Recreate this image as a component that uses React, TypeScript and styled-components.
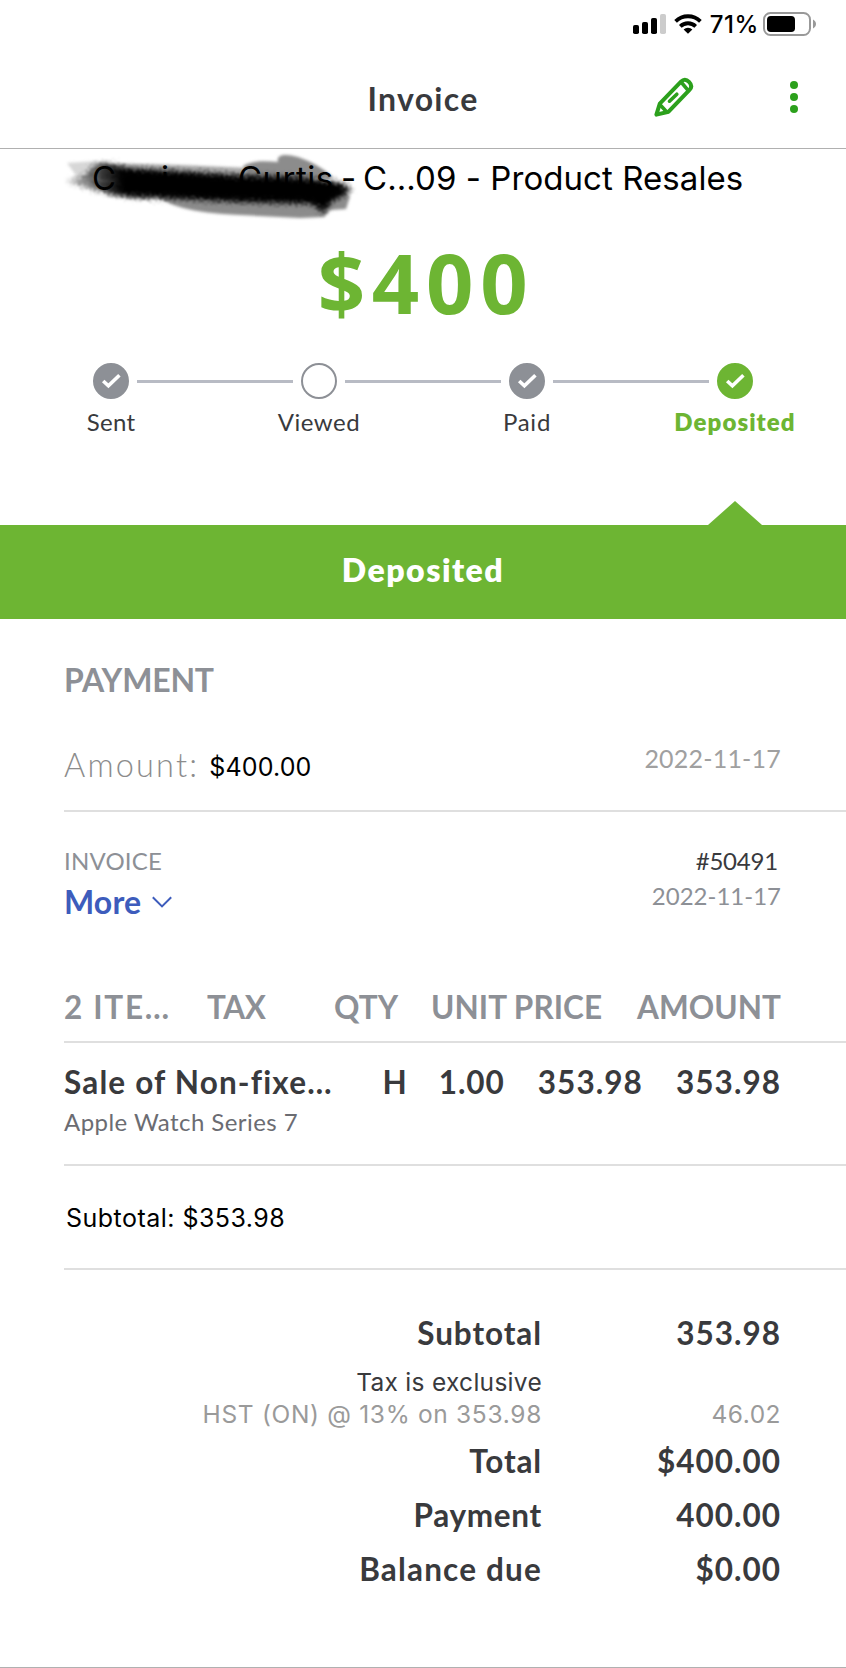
import React from "react";
import styled, { createGlobalStyle } from "styled-components";

const ink = "#393a3d";
const muted = "#8d9096";
const soft = "#a0a0a0";
const green = "#6db533";
const actionGreen = "#2ca01c";
const rule = "#dfdfdf";

const GlobalStyle = createGlobalStyle`
  * { box-sizing: border-box; }
  body { margin: 0; background: #fff; }
`;

type TextProps = {
  $size?: number;
  $weight?: number;
  $color?: string;
  $track?: number;
  $line?: number;
  $system?: boolean;
};

const Text = styled.span<TextProps>`
  display: block;
  white-space: pre;
  font-family: ${(p) => (p.$system ? '"Inter"' : '"Lato"')}, sans-serif;
  font-size: ${(p) => p.$size ?? 31.5}px;
  font-weight: ${(p) => p.$weight ?? 700};
  color: ${(p) => p.$color ?? ink};
  letter-spacing: ${(p) => p.$track ?? 0}px;
  line-height: ${(p) => (p.$line ? `${p.$line}px` : "normal")};
`;

const Screen = styled.main`
  width: 846px;
  height: 1668px;
  display: flex;
  flex-direction: column;
  overflow: hidden;
  background: #fff;
  border-bottom: 1px solid #b0b0b0;
`;

const StatusBar = styled.header`
  height: 48px;
  display: flex;
  align-items: center;
  justify-content: flex-end;
  padding-right: 30px;
`;

const StatusText = styled(Text)`
  margin: 0 4px 0 8px;
`;

const WifiIcon = styled.svg`
  margin-left: 8px;
`;

const NavBar = styled.nav`
  height: 101px;
  display: grid;
  grid-template-columns: 1fr auto 1fr;
  align-items: center;
  border-bottom: 1px solid #b0b0b0;
`;

const NavActions = styled.div`
  grid-column: 3;
  display: flex;
  align-items: center;
  justify-content: flex-end;
  gap: 96px;
  padding: 0 48px 2px 0;
`;

const NavTitle = styled(Text)`
  grid-column: 2;
`;

const Customer = styled.div`
  position: relative;
  height: 57px;
  display: flex;
  align-items: center;
  padding-left: 92px;
`;

const NamePart = styled(Text)<{ $width: number }>`
  position: relative;
  width: ${(p) => p.$width}px;
`;

const Scribble = styled.svg`
  position: absolute;
  left: 50px;
  top: 1px;
`;

const Total = styled.div`
  height: 151px;
  display: flex;
  align-items: center;
  justify-content: center;
  padding-left: 6px;
`;

const TotalText = styled(Text)`
  font-family: "Open Sans", sans-serif;
`;

const Stepper = styled.section`
  height: 168px;
  padding-top: 6px;
`;

const Track = styled.div`
  height: 36px;
  display: flex;
  align-items: center;
  gap: 8px;
  padding-left: 93px;
`;

const Dot = styled.div<{ $fill: string }>`
  width: 36px;
  height: 36px;
  flex: none;
  border-radius: 50%;
  background: ${(p) => p.$fill};
  border: 2px solid ${(p) => (p.$fill === "#fff" ? muted : p.$fill)};
  display: flex;
  align-items: center;
  justify-content: center;
`;

const Connector = styled.div`
  width: 156px;
  height: 3px;
  margin-top: 1px;
  flex: none;
  background: #b8bbc4;
`;

const StepLabels = styled.div`
  display: grid;
  grid-template-columns: repeat(4, 208px);
  justify-items: center;
  padding-left: 7px;
`;

const Banner = styled.section`
  position: relative;
  height: 94px;
  display: flex;
  align-items: center;
  justify-content: center;
  padding-bottom: 5px;
  background: ${green};
`;

const BannerArrow = styled.i`
  position: absolute;
  left: 708px;
  top: -24px;
  border: 27px solid transparent;
  border-top: 0;
  border-bottom: 24px solid ${green};
`;

const Content = styled.div`
  padding-left: 64px;
`;

const Section = styled.section<{ $height: number; $top?: number; $ruled?: boolean }>`
  height: ${(p) => p.$height}px;
  padding: ${(p) => p.$top ?? 0}px 65px 0 0;
  border-bottom: ${(p) => (p.$ruled ? `2px solid ${rule}` : "0")};
`;

const Between = styled.div`
  display: flex;
  justify-content: space-between;
  align-items: flex-start;
`;

const AmountLine = styled.div`
  display: flex;
  gap: 10px;
`;

const InvoiceNumber = styled(Text)`
  margin-right: 3px;
`;

const SubtotalNote = styled(Text)`
  padding-left: 2px;
`;

const MoreLink = styled.div`
  display: flex;
  align-items: center;
  gap: 11px;
`;

const TableRow = styled.div<{ $columns: string }>`
  display: grid;
  grid-template-columns: ${(p) => p.$columns};
`;

const RightText = styled(Text)`
  text-align: right;
`;

const Totals = styled.section`
  padding-top: 36px;
`;

const TotalRow = styled.div<{ $gapBelow?: number }>`
  display: grid;
  grid-template-columns: 478px 239px;
  margin-bottom: ${(p) => p.$gapBelow ?? 0}px;
`;

const Check = () => (
  <svg width="22" height="18" viewBox="0 0 22 18">
    <path d="M3.2 9 8.4 13.8 19.4 3.2" fill="none" stroke="#fff" strokeWidth="3.6" />
  </svg>
);

const steps = [
  { label: "Sent", fill: muted, done: true, track: 0.3 },
  { label: "Viewed", fill: "#fff", done: false, track: 0.5 },
  { label: "Paid", fill: muted, done: true, track: 0.76 },
  { label: "Deposited", fill: green, done: true, track: 1.06 },
];

const totals = [
  { label: "Subtotal", value: "353.98", track: 0.93, below: 6 },
  { label: "Tax is exclusive", value: "", small: true, color: ink, track: 0.29 },
  { label: "HST (ON) @ 13% on 353.98", value: "46.02", small: true, color: "#9a9a9a", track: 0.68, below: 4 },
  { label: "Total", value: "$400.00", track: 0.85 },
  { label: "Payment", value: "400.00", track: 0.68 },
  { label: "Balance due", value: "$0.00", track: 1.18 },
];

export default function App() {
  return (
    <>
      <GlobalStyle />
      <Screen>
        <StatusBar>
          <svg width="33" height="20" viewBox="0 0 33 20">
            <rect x="0" y="11" width="6" height="9" rx="1.8" />
            <rect x="9" y="8" width="6" height="12" rx="1.8" />
            <rect x="18" y="4" width="6" height="16" rx="1.8" />
            <rect x="27" y="0" width="6" height="20" rx="1.8" fill="#ccc" />
          </svg>
          <WifiIcon width="28" height="20" viewBox="0 0 28 20">
            <g fill="none" stroke="#000" strokeWidth="3.8">
              <path d="M1.6 7.3a17.8 17.8 0 0 1 24.8 0" />
              <path d="M6.3 12.3a11.2 11.2 0 0 1 15.4 0" />
            </g>
            <path d="M14 19.8 9.6 15.5a6.3 6.3 0 0 1 8.8 0z" />
          </WifiIcon>
          <StatusText $system $size={24} $weight={500} $color="#000" $track={0.6}>71%</StatusText>
          <svg width="53" height="24" viewBox="0 0 53 24">
            <rect x="1" y="1" width="46" height="22" rx="6.5" fill="none" stroke="#999" strokeWidth="2" />
            <rect x="4" y="4" width="28" height="16" rx="3.8" />
            <path d="M50 7.5c4 2 4 7 0 9z" fill="#999" />
          </svg>
        </StatusBar>

        <NavBar>
          <NavTitle $size={32} $track={1.29}>Invoice</NavTitle>
          <NavActions>
            <svg width="40" height="40" viewBox="0 0 40 40" fill="none" stroke={actionGreen} strokeWidth="4" strokeLinejoin="round" strokeLinecap="round">
              <path d="M2.4 37.6 5.8 26.6 27 4.6c2.6-2.6 5.2-2.6 8 .3 2.9 2.9 3 5.4.5 8L14.6 34.7z" />
              <path d="M27.5 5.5 34.3 13.6M6.3 28l6 6.5M15.5 24.2 22.8 17.2" strokeWidth="3.6" />
            </svg>
            <svg width="8" height="32" viewBox="0 0 8 32" fill={actionGreen}>
              <circle cx="4" cy="4" r="4" />
              <circle cx="4" cy="16" r="4" />
              <circle cx="4" cy="28" r="4" />
            </svg>
          </NavActions>
        </NavBar>

        <Customer>
          <Scribble width="320" height="76" viewBox="50 150 320 76">
            <defs>
              <filter id="rough" x="-10%" y="-30%" width="120%" height="160%">
                <feGaussianBlur in="SourceGraphic" stdDeviation="2.2" result="b" />
                <feTurbulence type="fractalNoise" baseFrequency="0.5" numOctaves="2" seed="4" result="noise" />
                <feDisplacementMap in="b" in2="noise" scale="12" xChannelSelector="R" yChannelSelector="G" />
                <feGaussianBlur stdDeviation="0.8" />
              </filter>
              <filter id="soft" x="-10%" y="-40%" width="120%" height="180%">
                <feGaussianBlur stdDeviation="1.7" />
              </filter>
              <linearGradient id="edge" x1="66" x2="122" y1="0" y2="0" gradientUnits="userSpaceOnUse">
                <stop offset="0" stopColor="#000" stopOpacity="0.3" />
                <stop offset="0.55" stopColor="#000" stopOpacity="0.6" />
                <stop offset="1" stopColor="#000" />
              </linearGradient>
            </defs>
            <g filter="url(#soft)" fill="#8c8c8c">
              <path d="M67 163 96 161 104 178 78 178z" opacity=".35" />
              <path d="M100 163 180 165 250 168 320 172V180H100z" opacity=".7" />
              <path d="M243 166C254 160 266 161 278 162 276 155 284 153 298 157 310 161 323 168 334 178L250 180z" />
              <path d="M152 192C168 206 190 213 240 215L300 218 324 217 330 210 346 209 350 196 330 185z" />
              <path d="M90 180 110 197 150 200 160 190z" opacity=".6" />
            </g>
            <g filter="url(#rough)">
              <path fill="url(#edge)" d="M66 181 84 176 94 165 104 163 128 168 180 171 240 175 300 177 324 180 342 183 352 190 342 196 330 203 325 213 311 204 240 202 180 199 130 197 98 191z" />
            </g>
          </Scribble>
          <NamePart $width={69} $system $size={33} $weight={400} $color="#000">C</NamePart>
          <NamePart $width={77} $system $size={33} $weight={400} $color="#000">i</NamePart>
          <NamePart $width={103} $system $size={33} $weight={400} $color="#000" $track={0.5}>Curtis</NamePart>
          <NamePart $width={22} $system $size={33} $weight={400} $color="#000">-</NamePart>
          <Text $system $size={33} $weight={400} $color="#000" $track={0.06}>C...09 - Product Resales</Text>
        </Customer>

        <Total>
          <TotalText $size={83} $weight={700} $color={green} $track={6.7}>$400</TotalText>
        </Total>

        <Stepper>
          <Track>
            {steps.map((s, i) => (
              <React.Fragment key={s.label}>
                {i > 0 && <Connector />}
                <Dot $fill={s.fill}>{s.done && <Check />}</Dot>
              </React.Fragment>
            ))}
          </Track>
          <StepLabels>
            {steps.map((s) => (
              <Text
                key={s.label}
                $size={24}
                $weight={s.fill === green ? 800 : 400}
                $color={s.fill === green ? green : ink}
                $track={s.track}
                $line={45}
              >
                {s.label}
              </Text>
            ))}
          </StepLabels>
        </Stepper>

        <Banner>
          <BannerArrow />
          <Text $size={32} $weight={800} $color="#fff" $track={1.5}>Deposited</Text>
        </Banner>

        <Content>
          <Section $height={119}>
            <Text $size={32} $color={muted} $track={-0.2} $line={121}>PAYMENT</Text>
          </Section>
          <Section $height={74} $ruled>
            <Between>
              <AmountLine>
                <Text $size={32.5} $weight={300} $color="#8c8c8c" $track={2.19} $line={54}>Amount:</Text>
                <Text $system $size={25} $weight={400} $color="#000" $track={0.14} $line={59}>$400.00</Text>
              </AmountLine>
              <Text $size={25} $weight={400} $color={soft} $track={0.2} $line={41}>2022-11-17</Text>
            </Between>
          </Section>
          <Section $height={160} $top={34}>
            <Between>
              <Text $size={24} $weight={400} $color={muted} $track={0.2} $line={30}>INVOICE</Text>
              <InvoiceNumber $size={24} $weight={400} $track={-0.2} $line={30}>#50491</InvoiceNumber>
            </Between>
            <Between>
              <MoreLink>
                <Text $size={32} $color="#3d5cbc" $track={0.13} $line={51}>More</Text>
                <svg width="20" height="12" viewBox="0 0 20 12" fill="none" stroke="#3d5cbc" strokeWidth="2">
                  <path d="M.8 1.2 10 10.4 19.2 1.2" />
                </svg>
              </MoreLink>
              <Text $size={24} $weight={400} $color={muted} $line={39}>2022-11-17</Text>
            </Between>
          </Section>

          <Section $height={71} $ruled>
            <TableRow $columns="143px 127px 97px 1fr 145px">
              <Text $color={muted} $track={1.7} $line={71}>2 ITE…</Text>
              <Text $color={muted} $track={-0.38} $line={71}>TAX</Text>
              <Text $color={muted} $track={0.1} $line={71}>QTY</Text>
              <Text $color={muted} $track={0.05} $line={71}>UNIT PRICE</Text>
              <RightText $color={muted} $track={0.05} $line={71}>AMOUNT</RightText>
            </TableRow>
          </Section>
          <Section $height={123} $top={13} $ruled>
            <TableRow $columns="318.5px 56.3px 99px 1fr 105px">
              <Text $track={1.16} $line={52}>Sale of Non-fixe…</Text>
              <Text $line={52}>H</Text>
              <Text $track={0.89} $line={52}>1.00</Text>
              <Text $track={1.03} $line={52}>353.98</Text>
              <RightText $track={1.03} $line={52}>353.98</RightText>
            </TableRow>
            <Text $size={24} $weight={400} $color="#6b6c72" $track={0.44} $line={28}>Apple Watch Series 7</Text>
          </Section>
          <Section $height={104} $top={1} $ruled>
            <SubtotalNote $system $size={25} $weight={400} $color="#000" $track={0.47} $line={102}>Subtotal: $353.98</SubtotalNote>
          </Section>

          <Totals>
            {totals.map((t) => (
              <TotalRow key={t.label} $gapBelow={t.below}>
                <RightText
                  $system={t.small}
                  $size={t.small ? 24.5 : 31.5}
                  $weight={t.small ? 400 : 700}
                  $color={t.color}
                  $track={t.track}
                  $line={t.small ? 32 : 54}
                >
                  {t.label}
                </RightText>
                <RightText
                  $system={t.small}
                  $size={t.small ? 24.5 : 31.5}
                  $weight={t.small ? 400 : 700}
                  $color={t.color}
                  $track={t.small ? 0.48 : 0.97}
                  $line={t.small ? 32 : 54}
                >
                  {t.value}
                </RightText>
              </TotalRow>
            ))}
          </Totals>
        </Content>
      </Screen>
    </>
  );
}
